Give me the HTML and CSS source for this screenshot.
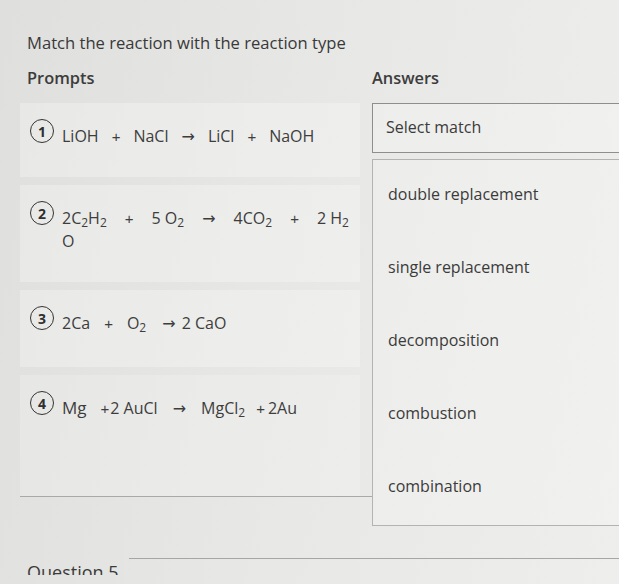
FILE: index.html
```html
<!DOCTYPE html>
<html lang="en">
<head>
<meta charset="utf-8">
<title>Match the reaction with the reaction type</title>
<link rel="stylesheet" href="styles.css">
</head>
<body>
<main class="page">
  <h1 class="title">Match the reaction with the reaction type</h1>
  <div class="columns">
    <section class="prompts">
      <h2 class="heading">Prompts</h2>
      <ol class="prompt-list">
        <li class="card card-1">
          <span class="num">1</span>
          <span class="eq eq-1">LiOH<span class="op">+</span>NaCl<span class="op arrow">→</span>LiCl<span class="op">+</span>NaOH</span>
        </li>
        <li class="card card-2">
          <span class="num">2</span>
          <span class="eq eq-2">2C<sub>2</sub>H<sub>2</sub><span class="op">+</span>5 O<sub>2</sub><span class="op arrow">→</span>4CO<sub>2</sub><span class="op">+</span>2 H<sub>2</sub><br>O</span>
        </li>
        <li class="card card-3">
          <span class="num">3</span>
          <span class="eq eq-3">2Ca<span class="op">+</span>O<sub>2</sub><span class="op arrow op-tight">→</span>2 CaO</span>
        </li>
        <li class="card card-4">
          <span class="num">4</span>
          <span class="eq eq-4"><span class="big">Mg</span><span class="op op-plus">+</span>2 AuCl<span class="op arrow">→</span>MgCl<sub>2</sub><span class="op op-plus2">+</span>2Au</span>
        </li>
      </ol>
    </section>
    <section class="answers">
      <h2 class="heading">Answers</h2>
      <div class="select">Select match</div>
      <ul class="options">
        <li class="option">double replacement</li>
        <li class="option">single replacement</li>
        <li class="option">decomposition</li>
        <li class="option">combustion</li>
        <li class="option">combination</li>
      </ul>
    </section>
  </div>
  <div class="next">
    <span class="next-label">Question 5</span>
    <div class="rule"></div>
  </div>
</main>
</body>
</html>
```

FILE: styles.css
```css
html, body {
  margin: 0;
  padding: 0;
}

body {
  width: 619px;
  height: 584px;
  overflow: hidden;
  background: linear-gradient(100deg, #dfdfdd 0%, #e7e7e5 45%, #eeeeec 100%);
  font-family: "Open Sans", "Noto Sans", sans-serif;
  color: #3b3b3b;
}

.page {
  padding: 32px 0 0 20px;
}

.title {
  margin: 0 0 13px 7px;
  font-size: 16.6px;
  font-weight: 400;
  line-height: 22px;
  color: #393939;
}

.columns {
  display: flex;
  gap: 12px;
  align-items: flex-start;
}

.prompts {
  width: 340px;
  flex: none;
}

.answers {
  width: 262px;
  flex: none;
}

.heading {
  margin: 0 0 14px 7px;
  font-size: 16.4px;
  font-weight: 600;
  line-height: 22px;
  color: #3c3c3c;
}

.answers .heading {
  margin-left: 0;
}

.prompt-list {
  list-style: none;
  margin: 0;
  padding: 0;
  display: flex;
  flex-direction: column;
  gap: 8px;
  border-bottom: 1px solid #a9a9a7;
  width: 352px;
}

.card {
  display: flex;
  align-items: flex-start;
  padding: 16px 0 0 10px;
  box-sizing: border-box;
  width: 340px;
  background: rgba(255, 255, 255, 0.28);
}

.card-1 { height: 74px; }
.card-2 { height: 97px; }
.card-3 { height: 77px; }
.card-4 { height: 121px; background: rgba(255, 255, 255, 0.2); }

.num {
  flex: none;
  width: 24px;
  height: 24px;
  box-sizing: border-box;
  border: 1.7px solid #343434;
  border-radius: 50%;
  display: flex;
  align-items: center;
  justify-content: center;
  font-size: 14px;
  font-weight: 700;
  color: #2f2f2f;
}

.eq {
  margin-left: 8px;
  padding-top: 6px;
  font-size: 16px;
  line-height: 22px;
  color: #3d3d3d;
  white-space: nowrap;
}

.eq sub {
  font-size: 12px;
  line-height: 0;
  vertical-align: -3px;
}

.op {
  display: inline-block;
  margin: 0 12px;
  font-family: "Liberation Sans", "DejaVu Sans", sans-serif;
  font-size: 15px;
}

.arrow {
  font-family: "DejaVu Sans", sans-serif;
  font-size: 16px;
  font-weight: 400;
}

.eq-1 .op {
  margin: 0 13px;
}

.eq-2 .op {
  margin: 0 18px;
}

.eq-3 .op {
  margin: 0 14px;
}

.eq-3 .op-tight {
  margin: 0 6px 0 16px;
}

.eq-4 .op {
  margin: 0 15px;
}

.eq-4 .op-plus {
  margin: 0 1px 0 14px;
}

.eq-4 .op-plus2 {
  margin: 0 3px 0 11px;
}

.big {
  font-size: 17px;
}

.select {
  height: 50px;
  box-sizing: border-box;
  border: 1px solid #8e8e8c;
  background: rgba(255, 255, 255, 0.22);
  padding: 0 0 2px 13px;
  display: flex;
  align-items: center;
  font-size: 16px;
  color: #3b3b3b;
  margin-bottom: 6px;
}

.options {
  list-style: none;
  margin: 0;
  padding: 0;
  border: 1px solid #b3b3b1;
  background: rgba(255, 255, 255, 0.2);
}

.option {
  height: 73px;
  box-sizing: border-box;
  display: flex;
  align-items: center;
  padding: 0 0 6px 15px;
  font-size: 16px;
  color: #3b3b3b;
}

.next {
  margin-top: 15px;
  height: 34px;
  overflow: hidden;
  display: flex;
  align-items: flex-start;
}

.next-label {
  padding: 19px 0 0 7px;
  font-size: 18px;
  line-height: 24px;
  color: #3b3b3b;
}

.rule {
  flex: 1;
  margin: 17px 0 0 10px;
  border-top: 1px solid #a6a6a4;
}
```
